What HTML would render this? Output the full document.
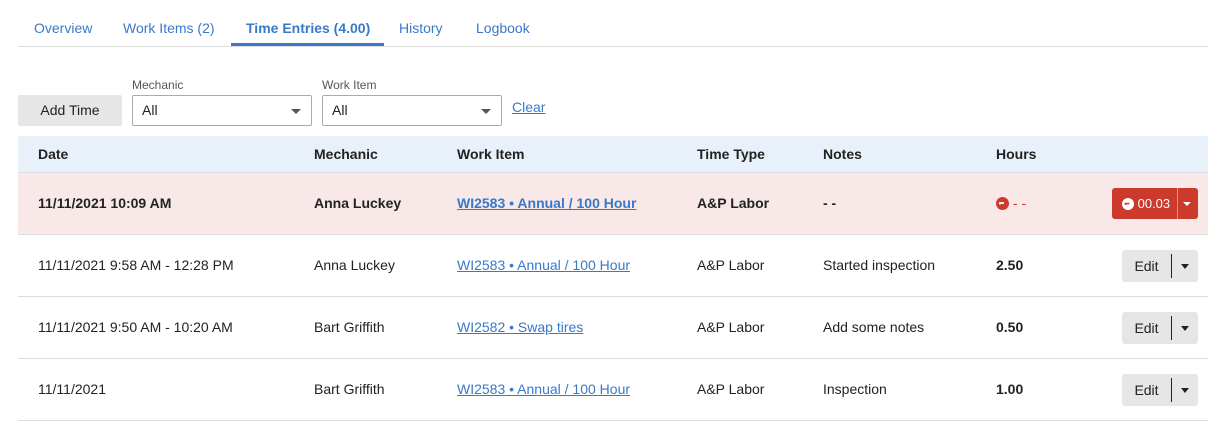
<!DOCTYPE html>
<html><head><style>
body{margin:0;width:1229px;height:442px;background:#fff;font-family:"Liberation Sans",Arial,sans-serif;color:#222;position:relative;overflow:hidden}
.a{position:absolute;white-space:nowrap}
.tab{top:20px;font-size:14px;color:#3a78c9}
.lbl{font-size:12px;color:#555;top:78px}
.sel{top:95px;height:29px;border:1px solid #aaa;border-radius:2px;background:#fff;font-size:14px;line-height:29px;padding-left:9px;box-sizing:border-box;height:31px}
.sel:after{content:"";position:absolute;right:10px;top:13px;border:5px solid transparent;border-top:5px solid #555;border-bottom:0}
.row{position:absolute;left:18px;width:1190px;border-bottom:1px solid #ddd;font-size:14px}
.row span{position:absolute;top:0}
.lnk{color:#3a78c9;text-decoration:underline}
.edit{position:absolute;right:10px;width:76px;height:32px;background:#e6e6e6;border-radius:3px;font-size:14px}
.edit i{position:absolute;left:0;width:49px;text-align:center;line-height:32px;font-style:normal}
.edit b{position:absolute;left:49px;top:4px;width:1px;height:24px;background:#222}
.edit u{position:absolute;right:9px;top:14px;border:4px solid transparent;border-top:5px solid #222;border-bottom:0}
</style></head><body>
<div class="a tab" style="left:34px">Overview</div>
<div class="a tab" style="left:123px">Work Items (2)</div>
<div class="a tab" style="left:246px;font-weight:bold">Time Entries (4.00)</div>
<div class="a tab" style="left:399px">History</div>
<div class="a tab" style="left:476px">Logbook</div>
<div class="a" style="left:18px;top:46px;width:1190px;height:1px;background:#ddd"></div>
<div class="a" style="left:231px;top:43px;width:153px;height:3px;background:#3a78c9"></div>
<div class="a" style="left:18px;top:95px;width:104px;height:31px;background:#e6e6e6;border-radius:2px;font-size:14px;text-align:center;line-height:31px">Add Time</div>
<div class="a lbl" style="left:132px">Mechanic</div>
<div class="a lbl" style="left:322px">Work Item</div>
<div class="a sel" style="left:132px;width:180px">All</div>
<div class="a sel" style="left:322px;width:180px">All</div>
<div class="a lnk" style="left:512px;top:99px;font-size:14px">Clear</div>
<div class="row" style="top:136px;height:36px;background:#e8f1fa;border-bottom:1px solid #dde;font-weight:bold;line-height:36px">
<span style="left:20px">Date</span><span style="left:296px">Mechanic</span><span style="left:439px">Work Item</span><span style="left:679px">Time Type</span><span style="left:805px">Notes</span><span style="left:978px">Hours</span></div>
<div class="row" style="top:173px;height:61px;background:#f8e8e7;line-height:61px;font-weight:bold">
<span style="left:20px">11/11/2021 10:09 AM</span><span style="left:296px">Anna Luckey</span><span style="left:439px" class="lnk">WI2583 • Annual / 100 Hour</span><span style="left:679px">A&amp;P Labor</span><span style="left:805px">- -</span>
<span style="left:978px;color:#cc3a2b;font-weight:normal"><svg width="13" height="13" style="vertical-align:-2px"><circle cx="6.5" cy="6.5" r="6.5" fill="#cc3a2b"/><path d="M4 7.5V6h4" stroke="#fff" stroke-width="1.8" fill="none"/></svg> - -</span>
<div style="position:absolute;right:10px;top:15px;width:86px;height:31px;background:#cc3a2b;border-radius:3px;color:#fff;font-weight:normal;font-size:13px;line-height:31px">
<span style="left:10px"><svg width="12" height="12" style="vertical-align:-2px"><circle cx="6" cy="6" r="6" fill="#fff"/><path d="M3.5 7V5.5h4" stroke="#cc3a2b" stroke-width="1.6" fill="none"/></svg> 00.03</span>
<b style="position:absolute;left:65px;top:0;width:1px;height:31px;background:#e88"></b>
<u style="position:absolute;right:7px;top:14px;border:4px solid transparent;border-top:4px solid #fff;border-bottom:0"></u></div></div>
<div class="row" style="top:235px;height:61px;line-height:61px">
<span style="left:20px">11/11/2021 9:58 AM - 12:28 PM</span><span style="left:296px">Anna Luckey</span><span style="left:439px" class="lnk">WI2583 • Annual / 100 Hour</span><span style="left:679px">A&amp;P Labor</span><span style="left:805px">Started inspection</span><span style="left:978px;font-weight:bold">2.50</span>
<div class="edit" style="top:15px"><i>Edit</i><b></b><u></u></div></div>
<div class="row" style="top:297px;height:61px;line-height:61px">
<span style="left:20px">11/11/2021 9:50 AM - 10:20 AM</span><span style="left:296px">Bart Griffith</span><span style="left:439px" class="lnk">WI2582 • Swap tires</span><span style="left:679px">A&amp;P Labor</span><span style="left:805px">Add some notes</span><span style="left:978px;font-weight:bold">0.50</span>
<div class="edit" style="top:15px"><i>Edit</i><b></b><u></u></div></div>
<div class="row" style="top:359px;height:61px;line-height:61px">
<span style="left:20px">11/11/2021</span><span style="left:296px">Bart Griffith</span><span style="left:439px" class="lnk">WI2583 • Annual / 100 Hour</span><span style="left:679px">A&amp;P Labor</span><span style="left:805px">Inspection</span><span style="left:978px;font-weight:bold">1.00</span>
<div class="edit" style="top:15px"><i>Edit</i><b></b><u></u></div></div>
</body></html>
